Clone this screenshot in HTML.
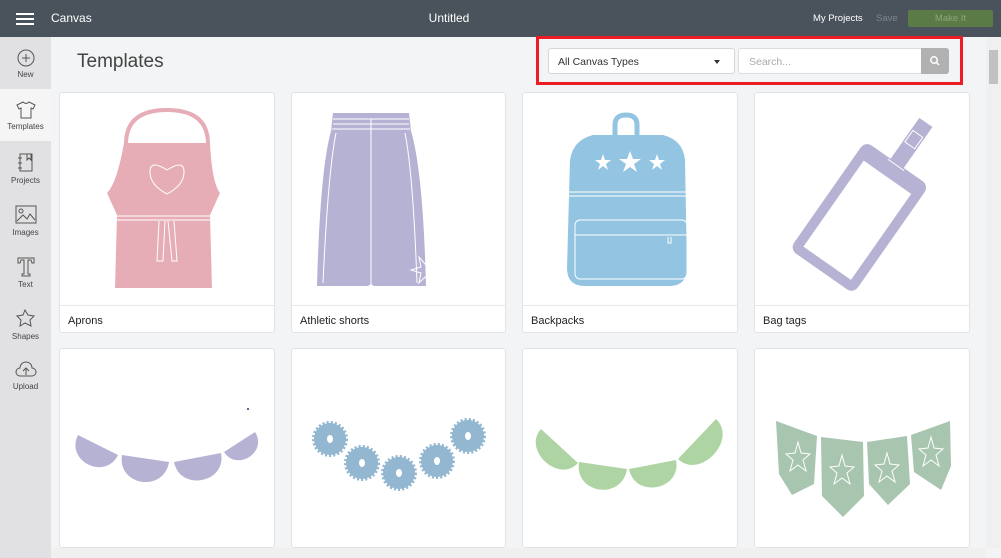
<!DOCTYPE html>
<html><head><meta charset="utf-8"><style>
*{margin:0;padding:0;box-sizing:border-box}
body{width:1001px;height:558px;overflow:hidden;background:#f3f4f6;font-family:"Liberation Sans",sans-serif;position:relative}
.hdr{position:absolute;left:0;top:0;width:1001px;height:37px;background:#4a535b}
.side{position:absolute;left:0;top:37px;width:51px;height:521px;background:#e1e1e3}
.si{position:absolute;left:0;width:51px;height:52px;text-align:center;font-size:8px;color:#444}
.si svg{display:block;margin:12px auto 3px}
.card{position:absolute;background:#fff;border:1px solid #e2e3e6;border-radius:3px}
.cap{position:absolute;left:0;right:0;bottom:0;height:27px;border-top:1px solid #e8e8ea;font-size:11px;color:#222;padding:9px 0 0 8px}
.card svg{position:absolute;left:0;top:0}
</style></head><body>
<div class="hdr">
 <div style="position:absolute;left:16px;top:13px;width:18px;height:2px;background:#fff;box-shadow:0 5px 0 #fff,0 10px 0 #fff"></div>
 <div style="position:absolute;left:51px;top:11px;color:#fff;font-size:12px">Canvas</div>
 <div style="position:absolute;left:0;width:898px;top:11px;text-align:center;color:#fff;font-size:12px">Untitled</div>
 <div style="position:absolute;left:813px;top:13px;color:#fff;font-size:9.5px">My Projects</div>
 <div style="position:absolute;left:876px;top:13px;color:#7d858c;font-size:9.5px">Save</div>
 <div style="position:absolute;left:908px;top:10px;width:85px;height:17px;background:#5a7b46;border-radius:2px;color:#8aa57a;font-size:9.5px;text-align:center;line-height:17px">Make It</div>
</div>
<div class="side">
 <div class="si" style="top:0"><svg width="18" height="18"><circle cx="9" cy="9" r="8" fill="none" stroke="#555" stroke-width="1"/><path d="M9 5v8M5 9h8" stroke="#555"/></svg>New</div>
 <div class="si" style="top:52px;background:#f5f5f6"><svg width="20" height="18"><path d="M7 1l-6 3 2 4 2-1v10h10V7l2 1 2-4-6-3q-3 3-6 0z" fill="none" stroke="#555"/></svg>Templates</div>
 <div class="si" style="top:104px"><svg width="18" height="20"><rect x="3" y="1" width="12" height="17" fill="none" stroke="#555"/><path d="M1 5h4M1 10h4M1 15h4M10 1v6l2-2 2 2V1" stroke="#555" fill="none"/></svg>Projects</div>
 <div class="si" style="top:156px"><svg width="22" height="20"><rect x="1" y="1" width="20" height="17" fill="none" stroke="#555"/><circle cx="6" cy="6" r="2" fill="none" stroke="#555"/><path d="M2 16l6-6 4 4 3-5 5 6" fill="none" stroke="#555"/></svg>Images</div>
 <div class="si" style="top:208px"><svg width="18" height="20"><path d="M1 1h16v5h-2l-1-3h-3v14h2v2H5v-2h2V3H4L3 6H1z" fill="none" stroke="#555"/></svg>Text</div>
 <div class="si" style="top:260px"><svg width="20" height="20"><path d="M9 1l3 5 6 1-4 4 1 6-6-3-5 3 1-6-4-4 6-1z" fill="none" stroke="#555"/></svg>Shapes</div>
 <div class="si" style="top:312px"><svg width="22" height="18"><path d="M5 15a4 4 0 0 1 0-8 6 6 0 0 1 12 0 4 4 0 0 1 0 8z" fill="none" stroke="#555"/><path d="M11 14V8M8 10l3-3 3 3" fill="none" stroke="#555"/></svg>Upload</div>
</div>
<div style="position:absolute;left:77px;top:51px;font-size:19px;color:#444">Templates</div>
<div style="position:absolute;left:536px;top:36px;width:427px;height:49px;border:3px solid #ec1c24"></div>
<div style="position:absolute;left:548px;top:48px;width:187px;height:26px;background:#fff;border:1px solid #d6d7da;border-radius:3px;font-size:10.5px;color:#333;padding:7px 0 0 9px">All Canvas Types<span style="position:absolute;right:14px;top:11px;border:3.5px solid transparent;border-top:4px solid #333"></span></div>
<div style="position:absolute;left:738px;top:48px;width:211px;height:26px;background:#fff;border:1px solid #dcdde0;border-radius:3px;font-size:10.5px;color:#aaa;padding:7px 0 0 10px">Search...</div>
<div style="position:absolute;left:921px;top:48px;width:28px;height:26px;background:#b1b1b1;border-radius:0 3px 3px 0"><svg width="28" height="26"><circle cx="13" cy="12" r="3.2" fill="none" stroke="#fff" stroke-width="1.5"/><path d="M15.5 14.5l2.5 2.5" stroke="#fff" stroke-width="1.5"/></svg></div>
<div style="position:absolute;left:986px;top:37px;width:15px;height:511px;background:#f0f0f0"><div style="position:absolute;left:3px;top:13px;width:9px;height:34px;background:#c1c1c1"></div></div>
<div style="position:absolute;left:51px;top:548px;width:935px;height:10px;background:#f0f0f0"></div>
<div class="card" style="left:59px;top:92px;width:216px;height:241px">
<svg width="216" height="213"><path d="M66 51q0-34 41-34t41 34" fill="none" stroke="#e6adb6" stroke-width="4"/><path d="M64 50h86q2 40 10 50l-10 22 2 73H55l2-73-10-22q10-10 17-50z" fill="#e6adb6"/><path d="M90 79q0-13 17-2q17-11 17 2q0 13-17 22q-17-9-17-22z" fill="none" stroke="#fff"/><path d="M57 123h93M57 127h93M99 128l-2 40h6l2-40M108 128l4 40h5l-3-40" stroke="#fff" fill="none"/></svg>
<div class="cap">Aprons</div></div>
<div class="card" style="left:291px;top:92px;width:215px;height:241px">
<svg width="215" height="213"><path d="M41 20h76l2 18q12 40 15 155H82l-3-2-3 2H25q3-115 14-155z" fill="#b6b2d3"/><path d="M41 26h76M41 31h76M40 36h78M79 26v167M44 40q-8 40-13 150M113 40q8 40 12 150" stroke="#fff" fill="none"/><path d="M150 164l-2 10 10 3-10 3 2 10-7-6-6 6 2-10-10-3 10-3-2-10 6 7z" fill="none" stroke="#fff" transform="translate(-10 0)"/></svg>
<div class="cap">Athletic shorts</div></div>
<div class="card" style="left:522px;top:92px;width:216px;height:241px">
<svg width="216" height="213"><path d="M92 42v-10q0-10 11-10t11 10v10" fill="none" stroke="#93c4e1" stroke-width="5"/><path d="M70 42h70q20 5 22 25l2 108q0 18-18 18H62q-18 0-18-18l3-108q3-20 23-25z" fill="#93c4e1"/><path d="M46 99h118M46 103h118" stroke="#fff"/><rect x="52" y="127" width="112" height="59" rx="5" fill="none" stroke="#fff"/><path d="M52 142h112M145 144v6h3v-6" stroke="#fff" fill="none"/><g fill="#fff"><path d="M80 61l2 6h6l-5 4 2 6-5-4-5 4 2-6-5-4h6z"/><path d="M107 58l3 8h8l-7 5 3 8-7-5-7 5 3-8-7-5h8z"/><path d="M134 61l2 6h6l-5 4 2 6-5-4-5 4 2-6-5-4h6z"/></g></svg>
<div class="cap">Backpacks</div></div>
<div class="card" style="left:754px;top:92px;width:216px;height:241px">
<svg width="216" height="213"><g transform="rotate(35 105 120)"><rect x="68" y="58" width="78" height="132" rx="8" fill="#b6b2d3"/><rect x="78" y="75" width="58" height="105" fill="#fff"/><rect x="99" y="8" width="16" height="52" fill="#b6b2d3"/><rect x="101" y="22" width="12" height="14" fill="none" stroke="#fff"/><path d="M97 60h20" stroke="#fff"/></g></svg>
<div class="cap">Bag tags</div></div>
<div class="card" style="left:59px;top:348px;width:216px;height:200px">
<svg width="216" height="200"><g fill="#b6b2d3"><path d="M18 86C5 112 45 132 58 106z"/><path d="M62 106C57 137 104 144 109 113z"/><path d="M114 113C120 143 167 134 161 104z"/><path d="M164 103C177 123 208 103 195 83z"/></g><circle cx="188" cy="60" r="1" fill="#336"/></svg></div>
<div class="card" style="left:291px;top:348px;width:215px;height:200px">
<svg width="215" height="200"><g fill="#93b7d0" stroke="#93b7d0" stroke-width="4" stroke-dasharray="2 2"><circle cx="38" cy="90" r="16"/><circle cx="70" cy="114" r="16"/><circle cx="107" cy="124" r="16"/><circle cx="145" cy="112" r="16"/><circle cx="176" cy="87" r="16"/></g><g fill="#fff"><ellipse cx="38" cy="90" rx="3" ry="4"/><ellipse cx="70" cy="114" rx="3" ry="4"/><ellipse cx="107" cy="124" rx="3" ry="4"/><ellipse cx="145" cy="112" rx="3" ry="4"/><ellipse cx="176" cy="87" rx="3" ry="4"/></g></svg></div>
<div class="card" style="left:522px;top:348px;width:216px;height:200px">
<svg width="216" height="200"><g fill="#afd4a4"><path d="M18 80C-1 101 36 135 55 114z"/><path d="M56 113C51 145 99 152 104 120z"/><path d="M106 120C112 150 159 141 153 111z"/><path d="M155 110C177 131 215 91 193 70z"/></g></svg></div>
<div class="card" style="left:754px;top:348px;width:216px;height:200px">
<svg width="216" height="200"><g fill="#a8c5b0"><path d="M21 72l41 15-3 48-22 11-13-21z"/><path d="M66 88l42 5 1 54-21 21-21-21z"/><path d="M112 93l40-6 3 48-22 21-19-21z"/><path d="M156 86l39-14 1 45-10 24-27-18z"/></g><g fill="none" stroke="#fff"><path d="M43 93l3 11 9 1-7 6 3 11-8-6-8 6 3-11-7-6 9-1z"/><path d="M87 106l3 11 9 1-7 6 3 11-8-6-8 6 3-11-7-6 9-1z"/><path d="M132 104l3 11 9 1-7 6 3 11-8-6-8 6 3-11-7-6 9-1z"/><path d="M176 88l3 11 9 1-7 6 3 11-8-6-8 6 3-11-7-6 9-1z"/></g></svg></div>
</body></html>
